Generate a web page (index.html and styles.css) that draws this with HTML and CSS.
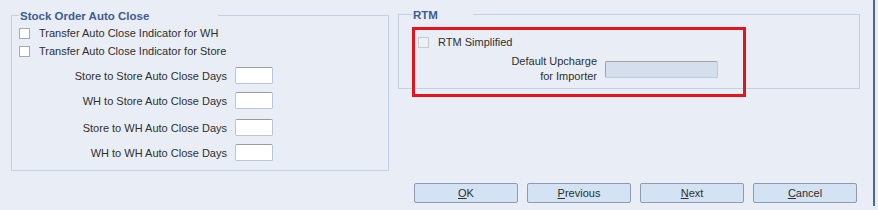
FILE: index.html
```html
<!DOCTYPE html>
<html>
<head>
    <title>Transfer Options</title>
    <link rel="stylesheet" href="styles.css">
</head>
<body>
    <div class="panel">
        <div class="top">
            <div class="grp grp-stock">
                <div class="grp-title title-stock">Stock Order Auto Close</div>
                <div class="cb-row first"><span class="cb"></span>Transfer Auto Close Indicator for WH</div>
                <div class="cb-row"><span class="cb"></span>Transfer Auto Close Indicator for Store</div>
                <div class="fld-row first"><label>Store to Store Auto Close Days</label><span class="inp"></span></div>
                <div class="fld-row"><label>WH to Store Auto Close Days</label><span class="inp"></span></div>
                <div class="fld-row tall"><label>Store to WH Auto Close Days</label><span class="inp"></span></div>
                <div class="fld-row"><label>WH to WH Auto Close Days</label><span class="inp"></span></div>
            </div>

            <div class="grp grp-rtm">
                <div class="grp-title title-rtm">RTM</div>
                <div class="cb-row rtm-cb"><span class="cb off"></span>RTM Simplified</div>
                <div class="upcharge">
                    <label>Default Upcharge<br>for Importer</label>
                    <span class="inp wide off"></span>
                </div>
                <!-- red highlight drawn over the rtm section -->
                <div class="mark"></div>
            </div>
        </div>

        <div class="buttons">
            <button class="btn"><u>O</u>K</button>
            <button class="btn"><u>P</u>revious</button>
            <button class="btn"><u>N</u>ext</button>
            <button class="btn"><u>C</u>ancel</button>
        </div>
    </div>
</body>
</html>
```

FILE: styles.css
```css
body {
    margin: 0;
    background-color: #e9eef6;
    font-family: 'Liberation Sans', Arial, sans-serif;
    font-size: 11px;
    color: #2e2e2e;
}

.panel {
    width: 875px;
    height: 206px;
    border-right: 2px solid #4c6a98;
    box-sizing: border-box;
    display: flex;
    flex-direction: column;
}

.top {
    display: flex;
    align-items: flex-start;
    padding-left: 11px;
    padding-top: 14px;
}

.grp {
    border: 1px solid #c3d1e4;
    box-sizing: border-box;
}

.grp-title {
    margin-top: -7px;
    height: 14px;
    line-height: 14px;
    background: #e9eef6;
    font-weight: bold;
    font-size: 11.5px;
    color: #3f5b94;
    box-sizing: border-box;
    padding-left: 1px;
}

.title-stock {
    width: 199px;
}

.title-rtm {
    width: 61px;
    margin-left: -6px;
}

.grp-stock {
    width: 378px;
    height: 156px;
    margin-top: 1px;
    padding-left: 7px;
}

.grp-rtm {
    position: relative;
    width: 462px;
    height: 75px;
    margin-left: 9px;
    padding-left: 19px;
}

.cb-row {
    display: flex;
    align-items: center;
    height: 18px;
}

.cb-row.first {
    margin-top: 1px;
}

.rtm-cb {
    margin-top: 11px;
}

.cb {
    width: 9px;
    height: 9px;
    border: 1px solid #a9a9a9;
    background: #fff;
    margin-right: 9px;
    flex-shrink: 0;
}

.cb.off {
    border-color: #c6cacf;
    background: #edf0f5;
}

.fld-row {
    display: flex;
    align-items: center;
    height: 25px;
}

.fld-row.first {
    margin-top: 3px;
}

.fld-row.tall {
    margin-top: 2px;
}

.fld-row label {
    width: 208px;
    text-align: right;
    margin-right: 8px;
}

.inp {
    width: 38px;
    height: 17px;
    box-sizing: border-box;
    background: #fff;
    border: 1px solid #b9c6d9;
    border-top-color: #9c9c9c;
    border-radius: 2px;
}

.inp.wide {
    width: 113px;
}

.inp.off {
    background: #d4dfee;
    border-color: #bccbdf;
    border-top-color: #a3a3a3;
    border-left-color: #a3a3a3;
}

.upcharge {
    display: flex;
    align-items: center;
    margin-top: 3px;
}

.upcharge label {
    width: 179px;
    text-align: right;
    line-height: 15px;
    margin-right: 8px;
}

.mark {
    position: absolute;
    left: 13px;
    top: 12px;
    width: 328px;
    height: 64px;
    border: 3px solid #e3141e;
}

.buttons {
    display: flex;
    gap: 9px;
    margin-top: auto;
    margin-bottom: 3px;
    padding-left: 414px;
}

.btn {
    width: 104px;
    height: 20px;
    padding: 0;
    background: #d3e3f3;
    border: 1px solid #8e9cb0;
    border-radius: 2px;
    font-family: 'Liberation Sans', Arial, sans-serif;
    font-size: 11px;
    color: #2e2e2e;
}
```
